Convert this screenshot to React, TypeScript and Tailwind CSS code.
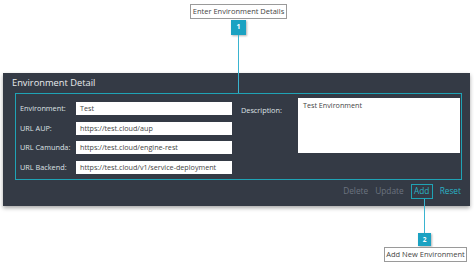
import React from "react";

const fields = [
  { label: "Environment:", value: "Test" },
  { label: "URL AUP:", value: "https://test.cloud/aup" },
  { label: "URL Camunda:", value: "https://test.cloud/engine-rest" },
  { label: "URL Backend:", value: "https://test.cloud/v1/service-deployment" },
];

export default function App() {
  return (
    <div
      className="relative w-[474px] h-[269px] bg-white overflow-hidden pt-[73px] px-[3px]"
      style={{ fontFamily: '"Open Sans", "Noto Sans", sans-serif' }}
    >
      {/* Panel */}
      <div className="w-[467px] h-[133px] bg-[#343a45] shadow-[0_2px_4px_rgba(0,0,0,0.35)] flex flex-col">
        <div className="h-[20px] flex items-center pl-[9px] text-[9.3px] text-[#e8eaec]">
          Environment Detail
        </div>
        <div className="ml-[12px] mr-[8px] h-[87px] border border-[#1fa3b5] flex">
          <div className="flex flex-col gap-[6.5px] pt-[8px] pl-[4px]">
            {fields.map((f) => (
              <div key={f.label} className="flex items-center h-[13px]">
                <div className="w-[56px] text-[7.3px] text-[#dfe2e5] whitespace-nowrap">{f.label}</div>
                <div className="w-[156px] h-[13px] bg-white flex items-center pl-[4px] text-[7.2px] text-[#444] whitespace-nowrap">
                  {f.value}
                </div>
              </div>
            ))}
          </div>
          <div className="flex pt-[4px] pl-[9px]">
            <div className="w-[57px] pt-[7px] text-[7.3px] text-[#dfe2e5]">Description:</div>
            <div className="w-[162px] h-[55px] bg-white pl-[5px] pt-[2px] text-[7.2px] text-[#444] leading-[10px]">
              Test Environment
            </div>
          </div>
        </div>
        <div className="flex justify-end items-center gap-[7px] mt-[4px] pr-[9px] h-[15px] text-[8.3px]">
          <span className="text-[#6c7480]">Delete</span>
          <span className="text-[#6c7480]">Update</span>
          <span className="h-[15px] w-[22px] border border-[#1fa3b5] text-[#2bb3c4] flex items-center justify-center">
            Add
          </span>
          <span className="text-[#2bb3c4]">Reset</span>
        </div>
      </div>

      {/* Callout 1 */}
      <div className="absolute left-[190px] top-[4px] w-[97px] h-[15px] border border-[#9a9a9a] bg-white flex items-center justify-center text-[7.5px] text-[#444] whitespace-nowrap">
        Enter Environment Details
      </div>
      <div className="absolute left-[231px] top-[20px] w-[15px] h-[15px] bg-[#1ba2c2] shadow-[1px_1px_2px_rgba(0,0,0,0.3)] flex items-center justify-center text-[7px] font-bold text-white">
        1
      </div>
      <div className="absolute left-[238px] top-[35px] w-px h-[58px] bg-[#3ab4d0]" />

      {/* Callout 2 */}
      <div className="absolute left-[424px] top-[199px] w-px h-[34px] bg-[#3ab4d0]" />
      <div className="absolute left-[418px] top-[233px] w-[13px] h-[13px] bg-[#1ba2c2] shadow-[1px_1px_2px_rgba(0,0,0,0.3)] flex items-center justify-center text-[6.5px] font-bold text-white">
        2
      </div>
      <div className="absolute left-[384px] top-[247px] w-[83px] h-[15px] border border-[#9a9a9a] bg-white flex items-center justify-center text-[7.5px] text-[#444] whitespace-nowrap">
        Add New Environment
      </div>
    </div>
  );
}
